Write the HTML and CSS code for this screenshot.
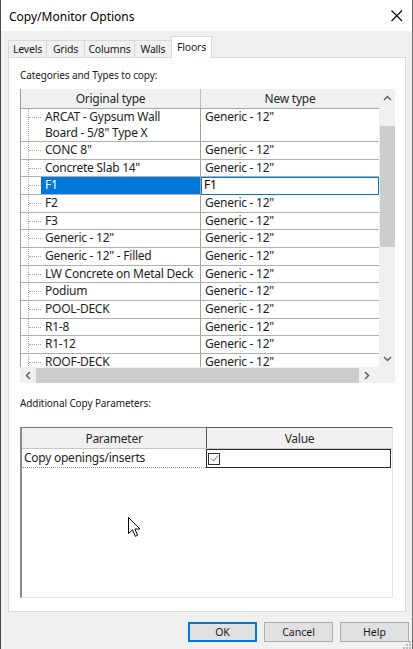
FILE: index.html
```html
<!DOCTYPE html>
<html lang="en">
<head>
  <meta charset="UTF-8">
  <title>Copy/Monitor Options</title>
  <link rel="stylesheet" href="styles.css">
</head>
<body>
  <div class="dialog" id="copy_monitor_options">
    <div class="dialog__titlebar">
      <span class="dialog__title">Copy/Monitor Options</span>
      <span class="dialog__close">
        <svg width="12" height="12" viewBox="0 0 12 12"><path d="M0.5 0.5 L11 11 M11 0.5 L0.5 11" stroke="#000" stroke-width="1.1" fill="none"/></svg>
      </span>
    </div>

    <div class="dialog__body">
      <div class="tabs">
        <div class="tab tab--levels">Levels</div>
        <div class="tab tab--grids">Grids</div>
        <div class="tab tab--columns">Columns</div>
        <div class="tab tab--walls">Walls</div>
        <div class="tab tab--floors tab--active">Floors</div>
      </div>

      <div class="tab-panel">
        <div class="section-label">Categories and Types to copy:</div>

        <div class="types-grid">
          <div class="types-grid__view">
            <div class="types-table">
              <div class="types-head">
                <div class="types-head__cell types-head__cell--orig">Original type</div>
                <div class="types-head__cell types-head__cell--new">New type</div>
              </div>

              <div class="type-row type-row--tall">
                <div class="type-orig"><span class="tree"></span><span class="type-orig__label">ARCAT - Gypsum Wall<br>Board - 5/8" Type X</span></div>
                <div class="type-new">Generic - 12"</div>
              </div>
              <div class="type-row">
                <div class="type-orig"><span class="tree"></span><span class="type-orig__label">CONC 8"</span></div>
                <div class="type-new">Generic - 12"</div>
              </div>
              <div class="type-row">
                <div class="type-orig"><span class="tree"></span><span class="type-orig__label">Concrete Slab 14"</span></div>
                <div class="type-new">Generic - 12"</div>
              </div>
              <div class="type-row type-row--selected">
                <div class="type-orig"><span class="tree"></span><span class="type-orig__label">F1</span></div>
                <div class="type-new type-new--editing">F1</div>
              </div>
              <div class="type-row">
                <div class="type-orig"><span class="tree"></span><span class="type-orig__label">F2</span></div>
                <div class="type-new">Generic - 12"</div>
              </div>
              <div class="type-row">
                <div class="type-orig"><span class="tree"></span><span class="type-orig__label">F3</span></div>
                <div class="type-new">Generic - 12"</div>
              </div>
              <div class="type-row">
                <div class="type-orig"><span class="tree"></span><span class="type-orig__label">Generic - 12"</span></div>
                <div class="type-new">Generic - 12"</div>
              </div>
              <div class="type-row">
                <div class="type-orig"><span class="tree"></span><span class="type-orig__label">Generic - 12" - Filled</span></div>
                <div class="type-new">Generic - 12"</div>
              </div>
              <div class="type-row">
                <div class="type-orig"><span class="tree"></span><span class="type-orig__label">LW Concrete on Metal Deck</span></div>
                <div class="type-new">Generic - 12"</div>
              </div>
              <div class="type-row">
                <div class="type-orig"><span class="tree"></span><span class="type-orig__label">Podium</span></div>
                <div class="type-new">Generic - 12"</div>
              </div>
              <div class="type-row">
                <div class="type-orig"><span class="tree"></span><span class="type-orig__label">POOL-DECK</span></div>
                <div class="type-new">Generic - 12"</div>
              </div>
              <div class="type-row">
                <div class="type-orig"><span class="tree"></span><span class="type-orig__label">R1-8</span></div>
                <div class="type-new">Generic - 12"</div>
              </div>
              <div class="type-row">
                <div class="type-orig"><span class="tree"></span><span class="type-orig__label">R1-12</span></div>
                <div class="type-new">Generic - 12"</div>
              </div>
              <div class="type-row">
                <div class="type-orig"><span class="tree"></span><span class="type-orig__label">ROOF-DECK</span></div>
                <div class="type-new">Generic - 12"</div>
              </div>
            </div>

            <div class="vscroll">
              <span class="vscroll__arrow">
                <svg width="9" height="6" viewBox="0 0 9 6"><path d="M1 5 L4.5 1.5 L8 5" stroke="#606060" stroke-width="1.5" fill="none"/></svg>
              </span>
              <div class="vscroll__track"><div class="vscroll__thumb"></div></div>
              <span class="vscroll__arrow">
                <svg width="9" height="6" viewBox="0 0 9 6"><path d="M1 1 L4.5 4.5 L8 1" stroke="#606060" stroke-width="1.5" fill="none"/></svg>
              </span>
            </div>
          </div>

          <div class="hscroll">
            <span class="hscroll__arrow">
              <svg width="6" height="9" viewBox="0 0 6 9"><path d="M5 1 L1.5 4.5 L5 8" stroke="#606060" stroke-width="1.5" fill="none"/></svg>
            </span>
            <div class="hscroll__thumb"></div>
            <span class="hscroll__arrow">
              <svg width="6" height="9" viewBox="0 0 6 9"><path d="M1 1 L4.5 4.5 L1 8" stroke="#606060" stroke-width="1.5" fill="none"/></svg>
            </span>
            <span class="hscroll__corner"></span>
          </div>
        </div>

        <div class="section-label section-label--params">Additional Copy Parameters:</div>

        <div class="param-grid">
          <div class="param-head">
            <div class="param-head__cell param-head__cell--name">Parameter</div>
            <div class="param-head__cell param-head__cell--value">Value</div>
          </div>
          <div class="param-row">
            <div class="param-row__name">Copy openings/inserts</div>
            <div class="param-row__value">
              <span class="checkbox">
                <svg width="9" height="9" viewBox="0 0 9 9"><path d="M1 4.5 L3.5 7 L8 1.5" stroke="#777" stroke-width="1" fill="none"/></svg>
              </span>
            </div>
          </div>
        </div>
      </div>

      <div class="dialog__buttons">
        <button class="dialog-button dialog-button--default">OK</button>
        <button class="dialog-button">Cancel</button>
        <button class="dialog-button">Help</button>
      </div>
    </div>

    <svg class="mouse-cursor" width="13" height="21" viewBox="0 0 13 21">
      <path d="M0.5 0.5 L0.5 16.5 L4.5 12.8 L7.3 19.3 L9.6 18.3 L6.9 12 L12 12 Z" fill="#fff" stroke="#000" stroke-width="1" stroke-linejoin="miter"/>
    </svg>

    <svg class="size-grip" width="9" height="9" viewBox="0 0 9 9">
      <rect x="7" y="1" width="2" height="2" fill="#bdbdbd"/>
      <rect x="4" y="4" width="2" height="2" fill="#bdbdbd"/>
      <rect x="7" y="4" width="2" height="2" fill="#bdbdbd"/>
      <rect x="1" y="7" width="2" height="2" fill="#bdbdbd"/>
      <rect x="4" y="7" width="2" height="2" fill="#bdbdbd"/>
      <rect x="7" y="7" width="2" height="2" fill="#bdbdbd"/>
    </svg>
  </div>
</body>
</html>
```

FILE: styles.css
```css
/* Dialog frame */
html, body {
  margin: 0;
  padding: 0;
  background: #f0f0f0;
}

#copy_monitor_options {
  position: relative;
  width: 413px;
  height: 649px;
  box-sizing: border-box;
  background: #f0f0f0;
  border-left: 1px solid #4a4a4a;
  border-right: 1px solid #6e6e6e;
  font-family: "Noto Sans", "Open Sans", sans-serif;
  color: #000;
  overflow: hidden;
}

#copy_monitor_options .dialog__titlebar {
  height: 31px;
  background: #fff;
  display: flex;
  align-items: center;
  justify-content: space-between;
  padding: 0 8px 0 8px;
}

#copy_monitor_options .dialog__title {
  font-size: 12px;
  margin-top: 1px;
}

#copy_monitor_options .dialog__close {
  display: flex;
  margin-right: 1px;
}

#copy_monitor_options .dialog__body {
  padding: 6px 3px 0 7px;
}

/* Tabs */
#copy_monitor_options .tabs {
  display: flex;
  align-items: flex-end;
  height: 20px;
  font-size: 10.5px;
  letter-spacing: -0.2px;
  position: relative;
  z-index: 1;
}

#copy_monitor_options .tab {
  box-sizing: border-box;
  height: 17px;
  border: 1px solid #d9d9d9;
  border-bottom: 0;
  margin-right: -1px;
  display: flex;
  align-items: center;
  justify-content: center;
  background: #f0f0f0;
  color: #1a1a1a;
}

#copy_monitor_options .tab--levels { width: 39px; }
#copy_monitor_options .tab--grids { width: 39px; }
#copy_monitor_options .tab--columns { width: 51px; }
#copy_monitor_options .tab--walls { width: 38px; }
#copy_monitor_options .tab--floors { width: 41px; }

#copy_monitor_options .tab--active {
  height: 22px;
  margin-bottom: -1px;
  background: #fff;
  padding-bottom: 2px;
}

#copy_monitor_options .tab-panel {
  box-sizing: border-box;
  width: 398px;
  height: 555px;
  background: #fff;
  border: 1px solid #d9d9d9;
  padding: 9px 0 0 11px;
}

#copy_monitor_options .section-label {
  font-size: 10px;
  line-height: 16px;
  letter-spacing: -0.1px;
  color: #1a1a1a;
  margin-bottom: 6px;
}

#copy_monitor_options .section-label--params {
  margin-top: 12px;
  margin-bottom: 16px;
}

/* Types grid */
#copy_monitor_options .types-grid {
  width: 375px;
  height: 294px;
  font-size: 12px;
  letter-spacing: -0.25px;
  color: #1e1e1e;
}

#copy_monitor_options .types-grid__view {
  display: flex;
  height: 278px;
}

#copy_monitor_options .types-table {
  box-sizing: border-box;
  width: 359px;
  height: 278px;
  overflow: hidden;
  border-left: 1px solid #a0a0a0;
}

#copy_monitor_options .types-head {
  display: flex;
  height: 20px;
  box-sizing: border-box;
  background: #f0f0f0;
  border-bottom: 1px solid #a5a5a5;
  color: #2a2a2a;
}

#copy_monitor_options .types-head__cell {
  display: flex;
  align-items: center;
  justify-content: center;
}

#copy_monitor_options .types-head__cell--orig {
  box-sizing: border-box;
  width: 180px;
  border-right: 1px solid #bdbdbd;
}

#copy_monitor_options .types-head__cell--new {
  flex: 1;
}

#copy_monitor_options .type-row {
  display: flex;
  box-sizing: border-box;
  height: 17.67px;
  border-bottom: 1px solid #b0b0b0;
  line-height: 16px;
}

#copy_monitor_options .type-row--tall {
  height: 33px;
}

#copy_monitor_options .type-orig {
  box-sizing: border-box;
  width: 180px;
  display: flex;
  border-right: 1px solid #a0a0a0;
}

#copy_monitor_options .tree {
  width: 20px;
  flex: none;
  position: relative;
}

#copy_monitor_options .tree::before {
  content: "";
  position: absolute;
  left: 7px;
  top: -1px;
  bottom: -1px;
  border-left: 1px dotted #a8a8a8;
}

#copy_monitor_options .tree::after {
  content: "";
  position: absolute;
  left: 8px;
  width: 12px;
  top: 8px;
  border-top: 1px dotted #a8a8a8;
}

#copy_monitor_options .type-orig__label {
  flex: 1;
  padding-left: 4px;
  white-space: nowrap;
}

#copy_monitor_options .type-new {
  flex: 1;
  padding-left: 4px;
  white-space: nowrap;
}

#copy_monitor_options .type-row--selected .type-orig__label {
  background: #0078d7;
  color: #fff;
}

#copy_monitor_options .type-new--editing {
  box-shadow: inset 0 0 0 1px #0078d7;
  margin-bottom: -1px;
  padding-left: 3px;
  color: #000;
}

/* Scroll bars */
#copy_monitor_options .vscroll {
  width: 16px;
  background: #f0f0f0;
  display: flex;
  flex-direction: column;
}

#copy_monitor_options .vscroll__arrow {
  height: 17px;
  display: flex;
  align-items: center;
  justify-content: center;
}

#copy_monitor_options .vscroll__track {
  flex: 1;
  padding: 20px 0 0 1px;
}

#copy_monitor_options .vscroll__thumb {
  width: 15px;
  height: 121px;
  background: #cdcdcd;
}

#copy_monitor_options .hscroll {
  display: flex;
  align-items: center;
  height: 16px;
  background: #f0f0f0;
}

#copy_monitor_options .hscroll__arrow {
  width: 16px;
  height: 16px;
  display: flex;
  align-items: center;
  justify-content: center;
}

#copy_monitor_options .hscroll__thumb {
  width: 323px;
  height: 15px;
  background: #cdcdcd;
}

#copy_monitor_options .hscroll__corner {
  width: 16px;
  height: 16px;
}

/* Parameter grid */
#copy_monitor_options .param-grid {
  box-sizing: border-box;
  width: 373px;
  height: 171px;
  border-top: 1px solid #7a7a7a;
  border-left: 2px solid #8a8a8a;
  border-right: 1px solid #e3e3e3;
  border-bottom: 1px solid #e3e3e3;
  font-size: 12px;
  letter-spacing: -0.25px;
  color: #1e1e1e;
}

#copy_monitor_options .param-head {
  display: flex;
  height: 20px;
  background: #f0f0f0;
  border-bottom: 1px solid #c8c8c8;
}

#copy_monitor_options .param-head__cell {
  display: flex;
  align-items: center;
  justify-content: center;
  color: #2a2a2a;
}

#copy_monitor_options .param-head__cell--name {
  width: 184px;
}

#copy_monitor_options .param-head__cell--value {
  flex: 1;
  border-left: 1px solid #5a5a5a;
  border-top: 1px solid #5a5a5a;
  margin-top: -1px;
}

#copy_monitor_options .param-row {
  display: flex;
  height: 19px;
}

#copy_monitor_options .param-row__name {
  width: 184px;
  padding-left: 2px;
  line-height: 18px;
  box-sizing: border-box;
  border-bottom: 1px dotted #9a9a9a;
}

#copy_monitor_options .param-row__value {
  width: 185px;
  box-sizing: border-box;
  border: 1px solid #2a2a2a;
  display: flex;
  align-items: center;
  padding-left: 1px;
}

#copy_monitor_options .checkbox {
  box-sizing: border-box;
  width: 12px;
  height: 12px;
  border: 1px solid #333;
  display: flex;
  align-items: center;
  justify-content: center;
  background: #fff;
}

/* Buttons */
#copy_monitor_options .dialog__buttons {
  display: flex;
  justify-content: flex-end;
  gap: 7px;
  margin-top: 10px;
}

#copy_monitor_options .dialog-button {
  box-sizing: border-box;
  width: 69px;
  height: 20px;
  background: #e1e1e1;
  border: 1px solid #adadad;
  font-family: "Noto Sans", "Open Sans", sans-serif;
  font-size: 10.5px;
  color: #1a1a1a;
  padding: 0;
}

#copy_monitor_options .dialog-button--default {
  border: 2px solid #0078d7;
}

/* Overlays */
#copy_monitor_options .mouse-cursor {
  position: absolute;
  left: 127px;
  top: 517px;
}

#copy_monitor_options .size-grip {
  position: absolute;
  right: 1px;
  bottom: 0;
}
```
